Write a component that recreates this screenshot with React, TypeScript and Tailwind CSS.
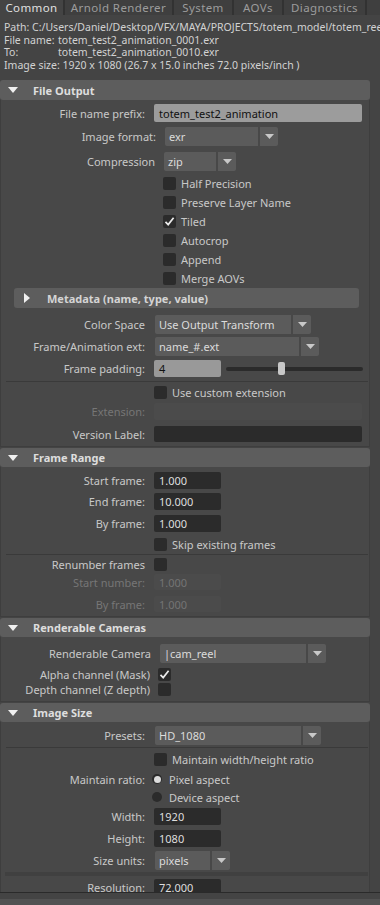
import React from "react";

const TriDown = ({ c = "#c8c8c8" }: { c?: string }) => (
  <svg width="9" height="5" viewBox="0 0 9 5">
    <path d="M0 0H9L4.5 5Z" fill={c} />
  </svg>
);

const HeaderTri = () => (
  <svg width="10" height="6" viewBox="0 0 10 6">
    <path d="M0 0H10L5 6Z" fill="#f0f0f0" />
  </svg>
);

const HeaderTriRight = () => (
  <svg width="6" height="10" viewBox="0 0 6 10">
    <path d="M0 0L6 5L0 10Z" fill="#f0f0f0" />
  </svg>
);

function Dropdown({ mainW, text }: { mainW: string; text: string }) {
  return (
    <div className="flex h-full gap-[2px]">
      <div
        className={`${mainW} h-full bg-[#5b5b5b] rounded-l-[2px] pl-[4px] flex items-center text-[#dcdcdc] whitespace-nowrap overflow-hidden`}
      >
        {text}
      </div>
      <div className="w-[18px] h-full bg-[#5b5b5b] rounded-r-[2px] flex items-center justify-center">
        <TriDown />
      </div>
    </div>
  );
}

function Check({ checked = false }: { checked?: boolean }) {
  return (
    <div className="w-[13px] h-[13px] bg-[#2b2b2b] rounded-[2px] flex items-center justify-center shrink-0">
      {checked && (
        <svg width="11" height="11" viewBox="0 0 11 11">
          <path d="M1.5 5.8L4.2 8.6L9.6 1.8" fill="none" stroke="#ececec" strokeWidth="1.7" />
        </svg>
      )}
    </div>
  );
}

function Header({ title, h = "h-[19px]" }: { title: string; h?: string }) {
  return (
    <div className={`${h} w-[370px] bg-[#5d5d5d] rounded-[3px] flex items-center pl-[8px]`}>
      <HeaderTri />
      <span className="ml-[15px] font-bold text-[#dedede]">{title}</span>
    </div>
  );
}

function DarkField({ text, disabled = false }: { text: string; disabled?: boolean }) {
  return (
    <div
      className={`w-[67px] h-full rounded-[2px] pl-[5px] flex items-center ${
        disabled ? "bg-[#4b4b4b] text-[#747474]" : "bg-[#2b2b2b] text-[#dedede]"
      }`}
    >
      {text}
    </div>
  );
}

const tabs = [
  { name: "Common", w: "w-[65px]", active: true },
  { name: "Arnold Renderer", w: "w-[109px]", active: false },
  { name: "System", w: "w-[60px]", active: false },
  { name: "AOVs", w: "w-[50px]", active: false },
  { name: "Diagnostics", w: "w-[83px]", active: false },
];

export default function App() {
  return (
    <div className="w-[380px] h-[905px] bg-[#444444] flex flex-col overflow-hidden font-['Noto_Sans',sans-serif] text-[11px] text-[#c8c8c8] leading-[13px]">
      {/* tabs */}
      <div className="flex h-[15px] shrink-0">
        {tabs.map((t) => (
          <div
            key={t.name}
            className={`${t.w} h-full flex items-center justify-center border-r-2 border-[#323232] text-[11.5px] tracking-[0.4px] ${
              t.active ? "bg-[#444444] text-[#e0e0e0]" : "bg-[#3f3f3f] text-[#9c9c9c]"
            }`}
          >
            {t.name}
          </div>
        ))}
        <div className="flex-1 h-full bg-[#3f3f3f]" />
      </div>

      {/* info */}
      <div className="pt-[6px] pl-[4px] text-[#d2d2d2] leading-[12.5px] whitespace-nowrap overflow-hidden text-[10.5px] shrink-0 h-[65px]">
        <div>Path: C:/Users/Daniel/Desktop/VFX/MAYA/PROJECTS/totem_model/totem_reel/images</div>
        <div>
          <span className="inline-block w-[54px]">File name:</span>totem_test2_animation_0001.exr
        </div>
        <div>
          <span className="inline-block w-[54px]">To:</span>totem_test2_animation_0010.exr
        </div>
        <div>Image size: 1920 x 1080 (26.7 x 15.0 inches 72.0 pixels/inch )</div>
      </div>

      {/* scroll area */}
      <div className="flex-1 overflow-hidden">
        {/* File Output */}
        <Header title="File Output" h="h-[20px]" />
        <div className="w-[370px] bg-[#484848] border-x border-b border-[#3e3e3e] pb-[4px] flex flex-col">
          <div className="flex items-center h-[18px] mt-[4px]">
            <div className="w-[144px] text-right">File name prefix:</div>
            <div className="ml-[9px] w-[208px] h-full bg-[#9c9c9c] rounded-[2px] text-[#111111] pl-[5px] flex items-center">
              totem_test2_animation
            </div>
          </div>
          <div className="flex items-center h-[19px] mt-[5px]">
            <div className="w-[155px] text-right">Image format:</div>
            <div className="ml-[9px] h-full">
              <Dropdown mainW="w-[93px]" text="exr" />
            </div>
          </div>
          <div className="flex items-center h-[19px] mt-[6px]">
            <div className="w-[154px] text-right">Compression</div>
            <div className="ml-[9px] h-full">
              <Dropdown mainW="w-[52px]" text="zip" />
            </div>
          </div>
          <div className="flex flex-col mt-[3px]">
            {[
              ["Half Precision", false],
              ["Preserve Layer Name", false],
              ["Tiled", true],
              ["Autocrop", false],
              ["Append", false],
              ["Merge AOVs", false],
            ].map(([label, c]) => (
              <div key={label as string} className="flex items-center h-[19px] pl-[162px]">
                <Check checked={c as boolean} />
                <span className="ml-[5px]">{label as string}</span>
              </div>
            ))}
          </div>
          <div className="ml-[13px] w-[345px] h-[20px] bg-[#5d5d5d] rounded-[3px] flex items-center pl-[10px]">
            <HeaderTriRight />
            <span className="ml-[17px] font-bold text-[#d4d4d4]">Metadata (name, type, value)</span>
          </div>
          <div className="flex items-center h-[19px] mt-[7px]">
            <div className="w-[144px] text-right">Color Space</div>
            <div className="ml-[10px] h-full">
              <Dropdown mainW="w-[136px]" text="Use Output Transform" />
            </div>
          </div>
          <div className="flex items-center h-[19px] mt-[3px]">
            <div className="w-[144px] text-right">Frame/Animation ext:</div>
            <div className="ml-[10px] h-full">
              <Dropdown mainW="w-[144px]" text="name_#.ext" />
            </div>
          </div>
          <div className="flex items-center h-[17px] mt-[4px]">
            <div className="w-[144px] text-right">Frame padding:</div>
            <div className="ml-[9px] w-[67px] h-full bg-[#999999] rounded-[2px] text-[#111111] pl-[5px] flex items-center">
              4
            </div>
            <div className="relative ml-[5px] w-[137px] h-[4px] bg-[#2b2b2b] rounded-full">
              <div className="absolute left-[52px] top-[-5px] w-[7px] h-[13px] bg-[#c8c8c8] rounded-[2px]" />
            </div>
          </div>
          <div className="ml-[5px] w-[362px] h-px bg-[#3a3a3a] mt-[4px]" />
          <div className="flex items-center h-[19px] mt-[1px] pl-[153px]">
            <Check />
            <span className="ml-[5px]">Use custom extension</span>
          </div>
          <div className="flex items-center h-[17px] mt-[1px]">
            <div className="w-[144px] text-right text-[#767676]">Extension:</div>
            <div className="ml-[9px] w-[208px] h-full bg-[#4b4b4b] rounded-[2px]" />
          </div>
          <div className="flex items-center h-[16px] mt-[6px]">
            <div className="w-[144px] text-right">Version Label:</div>
            <div className="ml-[9px] w-[208px] h-full bg-[#2b2b2b] rounded-[2px]" />
          </div>
        </div>

        {/* Frame Range */}
        <div className="mt-[1px]">
          <Header title="Frame Range" />
        </div>
        <div className="w-[370px] bg-[#484848] border-x border-b border-[#3e3e3e] pb-[4px] flex flex-col">
          <div className="flex items-center h-[17px] mt-[5px]">
            <div className="w-[144px] text-right">Start frame:</div>
            <div className="ml-[9px] h-full">
              <DarkField text="1.000" />
            </div>
          </div>
          <div className="flex items-center h-[17px] mt-[4px]">
            <div className="w-[144px] text-right">End frame:</div>
            <div className="ml-[9px] h-full">
              <DarkField text="10.000" />
            </div>
          </div>
          <div className="flex items-center h-[17px] mt-[5px]">
            <div className="w-[144px] text-right">By frame:</div>
            <div className="ml-[9px] h-full">
              <DarkField text="1.000" />
            </div>
          </div>
          <div className="flex items-center h-[17px] mt-[4px] pl-[153px]">
            <Check />
            <span className="ml-[5px]">Skip existing frames</span>
          </div>
          <div className="ml-[5px] w-[362px] h-px bg-[#3a3a3a] mt-[1px]" />
          <div className="flex items-center h-[18px]">
            <div className="w-[144px] text-right">Renumber frames</div>
            <div className="ml-[9px]">
              <Check />
            </div>
          </div>
          <div className="flex items-center h-[16px] mt-[1px]">
            <div className="w-[144px] text-right text-[#767676]">Start number:</div>
            <div className="ml-[9px] h-full">
              <DarkField text="1.000" disabled />
            </div>
          </div>
          <div className="flex items-center h-[16px] mt-[6px]">
            <div className="w-[144px] text-right text-[#767676]">By frame:</div>
            <div className="ml-[9px] h-full">
              <DarkField text="1.000" disabled />
            </div>
          </div>
        </div>

        {/* Renderable Cameras */}
        <div className="mt-[1px]">
          <Header title="Renderable Cameras" />
        </div>
        <div className="w-[370px] bg-[#484848] border-x border-b border-[#3e3e3e] pb-[4px] flex flex-col">
          <div className="flex items-center h-[19px] mt-[7px]">
            <div className="w-[150px] text-right">Renderable Camera</div>
            <div className="ml-[9px] h-full">
              <Dropdown mainW="w-[146px]" text="|cam_reel" />
            </div>
          </div>
          <div className="flex items-center h-[15px] mt-[4px]">
            <div className="w-[149px] text-right">Alpha channel (Mask)</div>
            <div className="ml-[8px]">
              <Check checked />
            </div>
          </div>
          <div className="flex items-center h-[15px]">
            <div className="w-[149px] text-right">Depth channel (Z depth)</div>
            <div className="ml-[8px]">
              <Check />
            </div>
          </div>
        </div>

        {/* Image Size */}
        <div className="mt-[1px]">
          <Header title="Image Size" />
        </div>
        <div className="w-[370px] bg-[#484848] border-x border-b border-[#3e3e3e] pb-[4px] flex flex-col">
          <div className="flex items-center h-[19px] mt-[4px]">
            <div className="w-[144px] text-right">Presets:</div>
            <div className="ml-[10px] h-full">
              <Dropdown mainW="w-[146px]" text="HD_1080" />
            </div>
          </div>
          <div className="ml-[5px] w-[362px] h-px bg-[#3a3a3a] mt-[2px]" />
          <div className="flex items-center h-[18px] mt-[2px] pl-[153px]">
            <Check />
            <span className="ml-[5px]">Maintain width/height ratio</span>
          </div>
          <div className="flex items-center h-[18px] mt-[2px]">
            <div className="w-[144px] text-right">Maintain ratio:</div>
            <div className="ml-[7px] w-[10px] h-[10px] rounded-full bg-[#2b2b2b] flex items-center justify-center">
              <div className="w-[7px] h-[7px] rounded-full bg-[#dcdcdc]" />
            </div>
            <span className="ml-[7px]">Pixel aspect</span>
          </div>
          <div className="flex items-center h-[18px]">
            <div className="w-[144px]" />
            <div className="ml-[7px] w-[10px] h-[10px] rounded-full bg-[#2b2b2b]" />
            <span className="ml-[7px]">Device aspect</span>
          </div>
          <div className="flex items-center h-[17px] mt-[2px]">
            <div className="w-[144px] text-right">Width:</div>
            <div className="ml-[9px] h-full">
              <DarkField text="1920" />
            </div>
          </div>
          <div className="flex items-center h-[17px] mt-[5px]">
            <div className="w-[144px] text-right">Height:</div>
            <div className="ml-[9px] h-full">
              <DarkField text="1080" />
            </div>
          </div>
          <div className="flex items-center h-[19px] mt-[4px]">
            <div className="w-[144px] text-right">Size units:</div>
            <div className="ml-[10px] h-full">
              <Dropdown mainW="w-[55px]" text="pixels" />
            </div>
          </div>
          <div className="ml-[4px] w-[363px] h-[4px] bg-[#404040] mt-[2px]" />
          <div className="flex items-center h-[17px] mt-[3px]">
            <div className="w-[144px] text-right">Resolution:</div>
            <div className="ml-[9px] h-full">
              <DarkField text="72.000" />
            </div>
          </div>
        </div>
      </div>

      {/* footer */}
      <div className="h-[13px] shrink-0 border-t border-[#2a2a2a] flex flex-col">
        <div className="h-[6px] bg-[#444444]" />
        <div className="flex-1 bg-[#525252]" />
      </div>
    </div>
  );
}
